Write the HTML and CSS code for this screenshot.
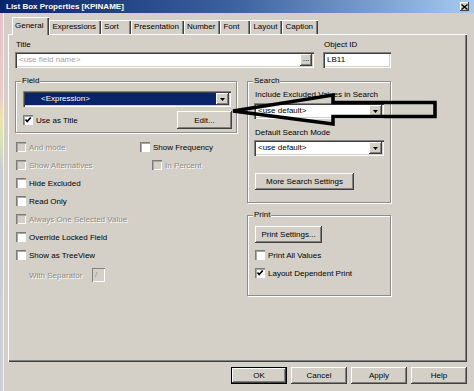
FILE: index.html
```html
<!DOCTYPE html>
<html>
<head>
<meta charset="utf-8">
<title>List Box Properties</title>
<link rel="stylesheet" href="styles.css">
</head>
<body>
<div class="titlebar">
  <span class="title">List Box Properties [KPINAME]</span>
  <span class="close"><svg width="7" height="6" viewBox="0 0 7 6"><path d="M0.5 0.5 L6.5 5.5 M6.5 0.5 L0.5 5.5" stroke="#000" stroke-width="1.4"/></svg></span>
</div>
<div class="frame">
  <div class="desk"></div>
  <div class="window">
    <div class="tabs">
      <div class="tab active">General</div>
      <div class="tab">Expressions</div>
      <div class="tab">Sort</div>
      <div class="tab">Presentation</div>
      <div class="tab">Number</div>
      <div class="tab">Font</div>
      <div class="tab">Layout</div>
      <div class="tab">Caption</div>
    </div>
    <div class="panel">
      <div class="toprow">
        <div class="title-col">
          <div class="lbl">Title</div>
          <div class="input with-btn"><span class="ph">&lt;use field name&gt;</span><span class="dots">...</span></div>
        </div>
        <div class="oid-col">
          <div class="lbl">Object ID</div>
          <div class="input"><span class="txt">LB11</span></div>
        </div>
      </div>
      <div class="cols">
        <div class="leftcol">
          <fieldset class="group field-group">
            <legend>Field</legend>
            <div class="combo sel"><span class="val">&lt;Expression&gt;</span><span class="drop"><svg width="5" height="3" viewBox="0 0 5 3"><path d="M0 0 H5 L2.5 3 Z" fill="#000"/></svg></span></div>
            <div class="fieldrow">
              <div class="ccell wide"><span class="cb"><svg width="10" height="10" viewBox="0 0 10 10"><path d="M2.5 4.5 L4.2 6.5 L7.8 2.5" fill="none" stroke="#000" stroke-width="1.7"/></svg></span><span>Use as Title</span></div>
              <button class="btn edit">Edit...</button>
            </div>
          </fieldset>
          <div class="checks">
            <div class="crow">
              <div class="ccell"><span class="cb dis"></span><span class="dtext">And mode</span></div>
              <div class="ccell wide"><span class="cb"></span><span>Show Frequency</span></div>
            </div>
            <div class="crow">
              <div class="ccell"><span class="cb dis"></span><span class="dtext">Show Alternatives</span></div>
              <div class="ccell wide sub"><span class="cb dis"></span><span class="dtext">In Percent</span></div>
            </div>
            <div class="crow"><div class="ccell"><span class="cb"></span><span>Hide Excluded</span></div></div>
            <div class="crow"><div class="ccell"><span class="cb"></span><span>Read Only</span></div></div>
            <div class="crow"><div class="ccell wide"><span class="cb dis"></span><span class="dtext">Always One Selected Value</span></div></div>
            <div class="crow"><div class="ccell wide"><span class="cb"></span><span>Override Locked Field</span></div></div>
            <div class="crow"><div class="ccell"><span class="cb"></span><span>Show as TreeView</span></div></div>
            <div class="crow sep"><span class="dtext seplbl">With Separator</span><span class="sepbox">/</span></div>
          </div>
        </div>
        <div class="rightcol">
          <fieldset class="group search-group">
            <legend>Search</legend>
            <div class="lbl">Include Excluded Values in Search</div>
            <div class="combo c1"><span class="val">&lt;use default&gt;</span><span class="drop"><svg width="5" height="3" viewBox="0 0 5 3"><path d="M0 0 H5 L2.5 3 Z" fill="#000"/></svg></span></div>
            <div class="lbl l2">Default Search Mode</div>
            <div class="combo c2"><span class="val">&lt;use default&gt;</span><span class="drop"><svg width="5" height="3" viewBox="0 0 5 3"><path d="M0 0 H5 L2.5 3 Z" fill="#000"/></svg></span></div>
            <button class="btn more">More Search Settings</button>
          </fieldset>
          <fieldset class="group print-group">
            <legend>Print</legend>
            <button class="btn psettings">Print Settings...</button>
            <div class="pchecks">
              <div class="crow"><div class="ccell wide"><span class="cb"></span><span>Print All Values</span></div></div>
              <div class="crow"><div class="ccell wide"><span class="cb"><svg width="10" height="10" viewBox="0 0 10 10"><path d="M2.5 4.5 L4.2 6.5 L7.8 2.5" fill="none" stroke="#000" stroke-width="1.7"/></svg></span><span>Layout Dependent Print</span></div></div>
            </div>
          </fieldset>
        </div>
      </div>
    </div>
    <div class="buttons">
      <button class="btn dlg default">OK</button>
      <button class="btn dlg">Cancel</button>
      <button class="btn dlg">Apply</button>
      <button class="btn dlg">Help</button>
    </div>
  </div>
</div>
<svg class="arrow" width="474" height="391" viewBox="0 0 474 391">
  <polygon points="233,111 333,95 333,102.5 435,102.5 435,116.5 333,116.5 333,124" fill="none" stroke="#000" stroke-width="3.5" stroke-linejoin="miter"/>
</svg>
</body>
</html>
```

FILE: styles.css
```css
* { box-sizing: border-box; }
html, body { margin: 0; padding: 0; }
body {
  width: 474px;
  height: 391px;
  overflow: hidden;
  position: relative;
  background: #d4d0c8;
  font-family: "Liberation Sans", Arial, sans-serif;
  font-size: 8px;
  color: #000;
}

/* title bar */
.titlebar {
  height: 13px;
  display: flex;
  align-items: center;
  justify-content: space-between;
  padding: 0 5px 0 6px;
  background: linear-gradient(to right, #0a246a 0%, #3d63a0 50%, #a6caf0 100%);
}
.title { color: #fff; font-weight: bold; font-size: 8px; line-height: 10px; }
.close {
  width: 9px; height: 9px;
  display: flex; align-items: center; justify-content: center;
  background: #d4d0c8;
  box-shadow: inset -1px -1px #404040, inset 1px 1px #fff;
}

/* frame */
.frame { display: flex; height: 378px; }
.desk {
  width: 3px;
  background: linear-gradient(#e6c2cb 0%, #e8ccc8 22%, #efe4ac 28%, #d6e2b8 34%, #c6ccd6 42%, #cdd0d6 100%);
}
.window { flex: 1; padding: 4px 0 0 4px; border-left: 1px solid #f2f1ee; }

/* tabs */
.tabs { display: flex; align-items: flex-end; height: 17px; padding-left: 4px; }
.tab {
  height: 14px;
  min-width: 30px;
  padding: 0 5px 0 3px;
  line-height: 14px;
  white-space: nowrap;
  background: #d4d0c8;
  box-shadow: inset 1px 1px #fff, inset -1px 0 #404040, inset -2px 0 #808080;
}
.tab.active {
  height: 18px;
  margin-bottom: -1px;
  padding: 0 6px 0 3px;
  line-height: 17px;
  position: relative;
  z-index: 1;
}

/* panel */
.panel {
  width: 459px;
  height: 328px;
  padding: 6px 0 0 7px;
  background: #d4d0c8;
  box-shadow: inset 1px 1px #fff, inset -1px -1px #404040, inset -2px -2px #808080;
}
.lbl { height: 10px; line-height: 10px; padding-left: 1px; white-space: nowrap; }

.toprow { display: flex; gap: 9px; }
.title-col { width: 299px; }
.oid-col { width: 68px; }
.toprow .input { margin-top: 2px; }

.input {
  height: 16px;
  display: flex;
  align-items: center;
  padding: 2px;
  background: #fff;
  box-shadow: inset 1px 1px #808080, inset 2px 2px #404040, inset -1px -1px #fff, inset -2px -2px #d4d0c8;
}
.input .ph { flex: 1; color: #a4a4a4; padding-left: 2px; line-height: 12px; }
.input .txt { padding-left: 2px; line-height: 12px; }
.dots {
  width: 12px; height: 12px;
  line-height: 10px;
  text-align: center;
  background: #d4d0c8;
  box-shadow: inset -1px -1px #404040, inset 1px 1px #fff, inset -2px -2px #808080;
}

.cols { display: flex; gap: 10px; margin-top: 8px; }
.leftcol { width: 222px; }
.rightcol { width: 144px; }

/* group boxes */
.group {
  margin: 0;
  border: 1px solid #8e8c88;
  box-shadow: inset 1px 1px #fff, 1px 1px #fff;
  min-width: 0;
}
.group legend {
  padding: 0 1px;
  height: 10px;
  line-height: 10px;
  background: #d4d0c8;
}
.field-group { padding: 5px 5px 3px 7px; }
.field-group legend { margin-left: -2px; }
.search-group { padding: 4px 6px 12px 6px; }
.search-group legend { margin-left: -1px; }
.print-group { margin-top: 7px; padding: 6px 6px 13px 6px; }
.print-group legend { margin-left: -1px; }

/* combos */
.combo {
  height: 16px;
  display: flex;
  padding: 2px;
  background: #fff;
  box-shadow: inset 1px 1px #808080, inset 2px 2px #404040, inset -1px -1px #fff, inset -2px -2px #d4d0c8;
}
.combo .val { flex: 1; line-height: 12px; padding-left: 2px; white-space: nowrap; }
.combo.sel .val { background: #0a246a; color: #fff; padding-left: 16px; }
.drop {
  width: 13px; height: 12px;
  display: flex; align-items: center; justify-content: center;
  background: #d4d0c8;
  box-shadow: inset -1px -1px #404040, inset 1px 1px #fff, inset -2px -2px #808080;
}
.c1 { margin-top: 3px; }
.l2 { margin-top: 9px; }
.c2 { margin-top: 2px; }

.fieldrow { display: flex; align-items: center; justify-content: space-between; margin-top: 4px; height: 18px; }

/* buttons */
.btn {
  border: 0;
  margin: 0;
  padding: 0;
  font: inherit;
  color: #000;
  height: 17px;
  background: #d4d0c8;
  text-align: center;
  box-shadow: inset -1px -1px #404040, inset 1px 1px #fff, inset -2px -2px #808080;
  white-space: nowrap;
}
.edit { width: 55px; height: 18px; margin-right: -1px; }
.more { display: block; width: 99px; margin: 17px 0 0 1px; }
.psettings { display: block; width: 67px; margin-left: 1px; }

/* checkboxes */
.checks { margin-top: 5px; }
.crow { display: flex; align-items: center; height: 18px; }
.ccell { flex: none; display: flex; align-items: center; gap: 3px; width: 124px; padding-left: 1px; white-space: nowrap; }
.ccell.wide { width: auto; }
.ccell.sub { padding-left: 13px; }
.fieldrow .ccell { padding-left: 0; }
.cb {
  width: 10px; height: 10px;
  flex: none;
  display: flex;
  background: #fff;
  box-shadow: inset 1px 1px #7c7c7c, inset 2px 2px #a8a6a2, inset -1px -1px #fff;
}
.cb.dis { background: #d4d0c8; }
.dtext { color: #8c8a86; text-shadow: 1px 1px 0 #fff; }
.crow.sep { height: 22px; }
.seplbl { width: 77px; padding-left: 14px; }
.sepbox {
  width: 13px; height: 14px;
  line-height: 14px;
  padding-left: 3px;
  color: #8c8a86;
  background: #d4d0c8;
  box-shadow: inset 1px 1px #808080, inset -1px -1px #fff;
}
.pchecks { margin-top: 3px; }

/* dialog buttons */
.buttons { display: flex; justify-content: flex-end; gap: 4px; width: 459px; margin-top: 5px; }
.dlg { width: 56px; }
.dlg.default { box-shadow: inset 0 0 0 1px #000, inset -2px -2px #404040, inset 2px 2px #fff, inset -3px -3px #808080; }

/* annotation arrow */
.arrow { position: absolute; left: 0; top: 0; pointer-events: none; }
```
